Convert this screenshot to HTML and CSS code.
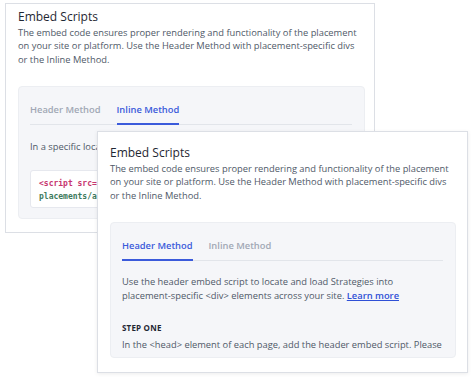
FILE: index.html
```html
<!DOCTYPE html>
<html lang="en">
<head>
    <meta charset="UTF-8">
    <meta name="viewport" content="width=device-width, initial-scale=1.0">
    <title>Embed Scripts</title>
    <link rel="stylesheet" href="styles.css">
</head>
<body>
    <!-- Earlier version: Inline Method selected -->
    <div class="card card-back">
        <h2 class="card-title">Embed Scripts</h2>
        <p class="card-text">The embed code ensures proper rendering and functionality of the placement on your site or platform. Use the Header Method with placement-specific divs or the Inline Method.</p>
        <div class="panel">
            <div class="tabs">
                <span class="tab">Header Method</span>
                <span class="tab active">Inline Method</span>
            </div>
            <div class="panel-body">
                <p class="panel-text">In a specific location on your page, paste the inline embed script.</p>
                <pre class="code"><span class="code-tag">&lt;script src=</span><span class="code-str">"https://cdn.example.com/embed/</span>
<span class="code-str">placements/async.js"</span><span class="code-tag">&gt;&lt;/script&gt;</span></pre>
            </div>
        </div>
    </div>

    <!-- Current version: Header Method selected -->
    <div class="card card-front">
        <h2 class="card-title">Embed Scripts</h2>
        <p class="card-text">The embed code ensures proper rendering and functionality of the placement on your site or platform. Use the Header Method with placement-specific divs or the Inline Method.</p>
        <div class="panel panel-fixed">
            <div class="tabs">
                <span class="tab active">Header Method</span>
                <span class="tab">Inline Method</span>
            </div>
            <div class="panel-body">
                <p class="panel-text">Use the header embed script to locate and load Strategies into placement-specific &lt;div&gt; elements across your site. <a href="#" class="link">Learn more</a></p>
                <h3 class="step-title">Step One</h3>
                <p class="panel-text panel-text-tight">In the &lt;head&gt; element of each page, add the header embed script. Please make sure it loads before any placement divs.</p>
            </div>
        </div>
    </div>
</body>
</html>
```

FILE: styles.css
```css
/* Base styles */
body {
    margin: 0;
    font-family: "Open Sans", "Noto Sans", sans-serif;
    background-color: #fff;
    color: #4f5968;
}

/* Cards */
.card {
    box-sizing: border-box;
    background-color: #fff;
    border: 1px solid #dcdfe5;
    padding: 0 11px 0 12px;
}

.card-back {
    width: 370px;
    height: 230px;
    margin: 3px 0 0 5px;
    padding-top: 5px;
    padding-right: 9px;
}

/* the newer card sits over the old one */
.card-front {
    position: absolute;
    left: 97px;
    top: 131px;
    width: 371px;
    height: 242px;
    padding-top: 13px;
    box-shadow: 0 1px 4px rgba(0, 0, 0, 0.08);
}

.card-title {
    margin: 0;
    font-size: 12px;
    line-height: 16px;
    font-weight: 400;
    color: #1f2733;
}

.card-text {
    margin: 1px 0 20px;
    font-size: 9.33px;
    line-height: 13.33px;
}

/* Tab panel */
.panel {
    background-color: #f5f6f9;
    border: 1px solid #eceef2;
    border-radius: 4px;
    padding: 0 12px 10px 11px;
}

.panel-fixed {
    box-sizing: border-box;
    height: 136px;
    display: flex;
    flex-direction: column;
    padding-bottom: 6px;
}

.panel-fixed .panel-body {
    flex: 1;
    min-height: 0;
    overflow: hidden;
}

.tabs {
    display: flex;
    gap: 16px;
    padding-top: 16px;
    border-bottom: 1px solid #e2e5ea;
}

.tab {
    padding-bottom: 7px;
    margin-bottom: -1px;
    border-bottom: 2px solid transparent;
    font-size: 9.33px;
    line-height: 13.33px;
    font-weight: 600;
    color: #a1a8b5;
}

.tab.active {
    color: #3b5bdb;
    border-bottom-color: #3b5bdb;
}

.panel-text {
    margin: 15px 0 0;
    font-size: 9.33px;
    line-height: 13.33px;
}

.panel-fixed .panel-text {
    margin-top: 14px;
}

.panel-fixed .panel-text-tight {
    margin-top: 5px;
}

.link {
    color: #2f50d6;
    font-weight: 600;
    text-decoration: underline;
}

.step-title {
    margin: 20px 0 0;
    font-size: 8px;
    line-height: 11px;
    font-weight: 700;
    letter-spacing: 0.2px;
    text-transform: uppercase;
    color: #1f2733;
}

/* Code sample */
.code {
    margin: 16px 0 0;
    padding: 6px 8px 4px;
    background-color: #fff;
    border: 1px solid #e6e8ee;
    border-radius: 3px;
    font-family: "DejaVu Sans Mono", monospace;
    font-size: 8px;
    line-height: 13px;
    font-weight: 700;
    overflow: hidden;
}

.code-tag {
    color: #c7366f;
}

.code-str {
    color: #3d7a5c;
}
```
